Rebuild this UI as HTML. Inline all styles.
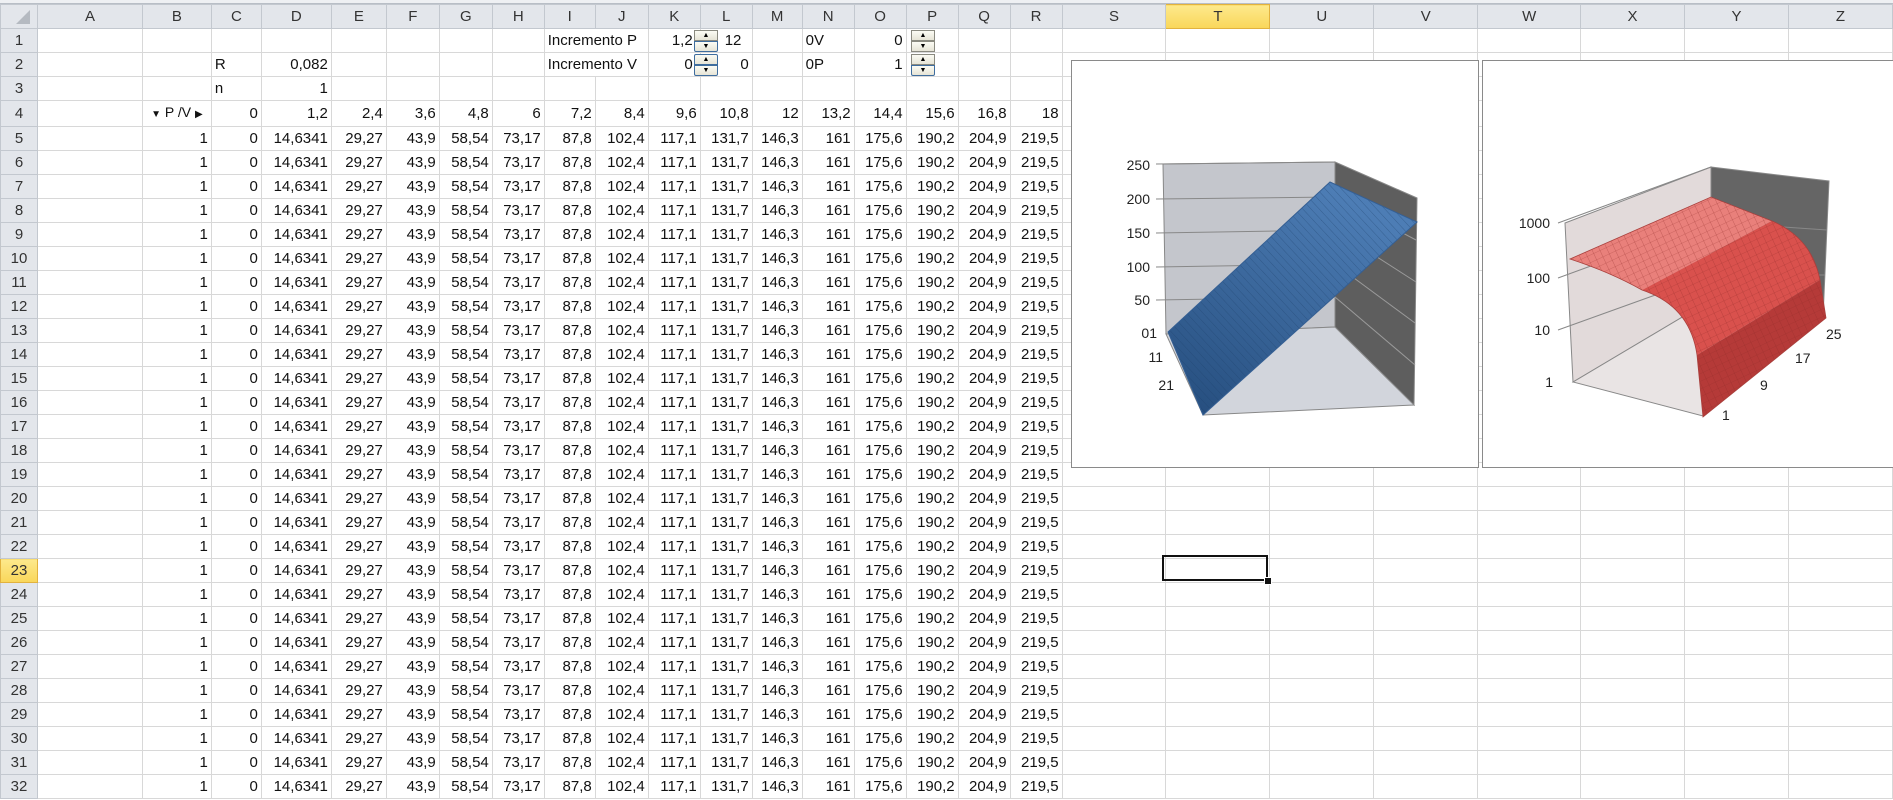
<!DOCTYPE html>
<html><head><meta charset="utf-8">
<style>
html,body{margin:0;padding:0;background:#fff;width:1893px;height:800px;overflow:hidden;font-family:"Liberation Sans",Arial,sans-serif;}
#top{position:absolute;left:0;top:0;width:1893px;height:4px;background:#eef0f3;border-bottom:1px solid #b8bec6;box-sizing:border-box}
table{position:absolute;left:0;top:4px;border-collapse:collapse;table-layout:fixed;font-size:15px;color:#111}
tr{height:24px}
td,th{height:24px;padding:0 3px;border:1px solid #d8d8d8;white-space:nowrap;overflow:hidden;box-sizing:border-box;line-height:22px}
th{background:#e3e6eb;border-color:#c3c8cf;font-weight:normal;color:#333;text-align:center;font-size:15px}
td{text-align:right}
td.l{text-align:left}
td.k{padding-right:7px;overflow:visible}
th.sel{background:linear-gradient(#fde98c,#f9d65a);border-color:#e2b23e}
.spin{position:absolute;width:24px;height:23px;box-sizing:border-box}
.spin div{height:11px;box-sizing:border-box;border:1px solid #8a8a80;background:linear-gradient(#fbfbf4,#e6e4d6);font-size:7px;line-height:9px;text-align:center;color:#000}
.spin div.b{border-color:#3f6d9e;border-radius:0 0 2px 2px}
</style></head><body>
<div id="top"></div>
<table>
<colgroup><col style="width:34px"><col style="width:105px"><col style="width:69px"><col style="width:50px"><col style="width:70px"><col style="width:55px"><col style="width:53px"><col style="width:53px"><col style="width:52px"><col style="width:51px"><col style="width:53px"><col style="width:52px"><col style="width:52px"><col style="width:50px"><col style="width:52px"><col style="width:52px"><col style="width:52px"><col style="width:52px"><col style="width:52px"><col style="width:104px"><col style="width:104px"><col style="width:104px"><col style="width:104px"><col style="width:103px"><col style="width:104px"><col style="width:104px"><col style="width:104px"></colgroup>
<thead><tr><th><svg width="20" height="18" style="display:block;margin-left:10px"><polygon points="16,2 16,16 2,16" fill="#b5bac1"/></svg></th><th>A</th><th>B</th><th>C</th><th>D</th><th>E</th><th>F</th><th>G</th><th>H</th><th>I</th><th>J</th><th>K</th><th>L</th><th>M</th><th>N</th><th>O</th><th>P</th><th>Q</th><th>R</th><th>S</th><th class="sel">T</th><th>U</th><th>V</th><th>W</th><th>X</th><th>Y</th><th>Z</th></tr></thead>
<tbody>
<tr><th>1</th><td></td><td></td><td></td><td></td><td></td><td></td><td></td><td></td><td class="l" colspan="2">Incremento P</td><td class="k">1,2</td><td class="l" style="padding-left:24px">12</td><td></td><td class="l">0V</td><td>0</td><td></td><td></td><td></td><td></td><td></td><td></td><td></td><td></td><td></td><td></td><td></td></tr>
<tr><th>2</th><td></td><td></td><td class="l">R</td><td>0,082</td><td></td><td></td><td></td><td></td><td class="l" colspan="2">Incremento V</td><td class="k">0</td><td>0</td><td></td><td class="l">0P</td><td>1</td><td></td><td></td><td></td><td></td><td></td><td></td><td></td><td></td><td></td><td></td><td></td></tr>
<tr><th>3</th><td></td><td></td><td class="l">n</td><td>1</td><td></td><td></td><td></td><td></td><td></td><td></td><td></td><td></td><td></td><td></td><td></td><td></td><td></td><td></td><td></td><td></td><td></td><td></td><td></td><td></td><td></td><td></td></tr>
<tr><th>4</th><td></td><td style="text-align:center;font-size:14px"><span style="font-size:10px">&#9660;</span> P /V <span style="font-size:10px">&#9654;</span></td><td>0</td><td>1,2</td><td>2,4</td><td>3,6</td><td>4,8</td><td>6</td><td>7,2</td><td>8,4</td><td>9,6</td><td>10,8</td><td>12</td><td>13,2</td><td>14,4</td><td>15,6</td><td>16,8</td><td>18</td><td></td><td></td><td></td><td></td><td></td><td></td><td></td><td></td></tr>
<tr><th>5</th><td></td><td>1</td><td>0</td><td>14,6341</td><td>29,27</td><td>43,9</td><td>58,54</td><td>73,17</td><td>87,8</td><td>102,4</td><td>117,1</td><td>131,7</td><td>146,3</td><td>161</td><td>175,6</td><td>190,2</td><td>204,9</td><td>219,5</td><td></td><td></td><td></td><td></td><td></td><td></td><td></td><td></td></tr>
<tr><th>6</th><td></td><td>1</td><td>0</td><td>14,6341</td><td>29,27</td><td>43,9</td><td>58,54</td><td>73,17</td><td>87,8</td><td>102,4</td><td>117,1</td><td>131,7</td><td>146,3</td><td>161</td><td>175,6</td><td>190,2</td><td>204,9</td><td>219,5</td><td></td><td></td><td></td><td></td><td></td><td></td><td></td><td></td></tr>
<tr><th>7</th><td></td><td>1</td><td>0</td><td>14,6341</td><td>29,27</td><td>43,9</td><td>58,54</td><td>73,17</td><td>87,8</td><td>102,4</td><td>117,1</td><td>131,7</td><td>146,3</td><td>161</td><td>175,6</td><td>190,2</td><td>204,9</td><td>219,5</td><td></td><td></td><td></td><td></td><td></td><td></td><td></td><td></td></tr>
<tr><th>8</th><td></td><td>1</td><td>0</td><td>14,6341</td><td>29,27</td><td>43,9</td><td>58,54</td><td>73,17</td><td>87,8</td><td>102,4</td><td>117,1</td><td>131,7</td><td>146,3</td><td>161</td><td>175,6</td><td>190,2</td><td>204,9</td><td>219,5</td><td></td><td></td><td></td><td></td><td></td><td></td><td></td><td></td></tr>
<tr><th>9</th><td></td><td>1</td><td>0</td><td>14,6341</td><td>29,27</td><td>43,9</td><td>58,54</td><td>73,17</td><td>87,8</td><td>102,4</td><td>117,1</td><td>131,7</td><td>146,3</td><td>161</td><td>175,6</td><td>190,2</td><td>204,9</td><td>219,5</td><td></td><td></td><td></td><td></td><td></td><td></td><td></td><td></td></tr>
<tr><th>10</th><td></td><td>1</td><td>0</td><td>14,6341</td><td>29,27</td><td>43,9</td><td>58,54</td><td>73,17</td><td>87,8</td><td>102,4</td><td>117,1</td><td>131,7</td><td>146,3</td><td>161</td><td>175,6</td><td>190,2</td><td>204,9</td><td>219,5</td><td></td><td></td><td></td><td></td><td></td><td></td><td></td><td></td></tr>
<tr><th>11</th><td></td><td>1</td><td>0</td><td>14,6341</td><td>29,27</td><td>43,9</td><td>58,54</td><td>73,17</td><td>87,8</td><td>102,4</td><td>117,1</td><td>131,7</td><td>146,3</td><td>161</td><td>175,6</td><td>190,2</td><td>204,9</td><td>219,5</td><td></td><td></td><td></td><td></td><td></td><td></td><td></td><td></td></tr>
<tr><th>12</th><td></td><td>1</td><td>0</td><td>14,6341</td><td>29,27</td><td>43,9</td><td>58,54</td><td>73,17</td><td>87,8</td><td>102,4</td><td>117,1</td><td>131,7</td><td>146,3</td><td>161</td><td>175,6</td><td>190,2</td><td>204,9</td><td>219,5</td><td></td><td></td><td></td><td></td><td></td><td></td><td></td><td></td></tr>
<tr><th>13</th><td></td><td>1</td><td>0</td><td>14,6341</td><td>29,27</td><td>43,9</td><td>58,54</td><td>73,17</td><td>87,8</td><td>102,4</td><td>117,1</td><td>131,7</td><td>146,3</td><td>161</td><td>175,6</td><td>190,2</td><td>204,9</td><td>219,5</td><td></td><td></td><td></td><td></td><td></td><td></td><td></td><td></td></tr>
<tr><th>14</th><td></td><td>1</td><td>0</td><td>14,6341</td><td>29,27</td><td>43,9</td><td>58,54</td><td>73,17</td><td>87,8</td><td>102,4</td><td>117,1</td><td>131,7</td><td>146,3</td><td>161</td><td>175,6</td><td>190,2</td><td>204,9</td><td>219,5</td><td></td><td></td><td></td><td></td><td></td><td></td><td></td><td></td></tr>
<tr><th>15</th><td></td><td>1</td><td>0</td><td>14,6341</td><td>29,27</td><td>43,9</td><td>58,54</td><td>73,17</td><td>87,8</td><td>102,4</td><td>117,1</td><td>131,7</td><td>146,3</td><td>161</td><td>175,6</td><td>190,2</td><td>204,9</td><td>219,5</td><td></td><td></td><td></td><td></td><td></td><td></td><td></td><td></td></tr>
<tr><th>16</th><td></td><td>1</td><td>0</td><td>14,6341</td><td>29,27</td><td>43,9</td><td>58,54</td><td>73,17</td><td>87,8</td><td>102,4</td><td>117,1</td><td>131,7</td><td>146,3</td><td>161</td><td>175,6</td><td>190,2</td><td>204,9</td><td>219,5</td><td></td><td></td><td></td><td></td><td></td><td></td><td></td><td></td></tr>
<tr><th>17</th><td></td><td>1</td><td>0</td><td>14,6341</td><td>29,27</td><td>43,9</td><td>58,54</td><td>73,17</td><td>87,8</td><td>102,4</td><td>117,1</td><td>131,7</td><td>146,3</td><td>161</td><td>175,6</td><td>190,2</td><td>204,9</td><td>219,5</td><td></td><td></td><td></td><td></td><td></td><td></td><td></td><td></td></tr>
<tr><th>18</th><td></td><td>1</td><td>0</td><td>14,6341</td><td>29,27</td><td>43,9</td><td>58,54</td><td>73,17</td><td>87,8</td><td>102,4</td><td>117,1</td><td>131,7</td><td>146,3</td><td>161</td><td>175,6</td><td>190,2</td><td>204,9</td><td>219,5</td><td></td><td></td><td></td><td></td><td></td><td></td><td></td><td></td></tr>
<tr><th>19</th><td></td><td>1</td><td>0</td><td>14,6341</td><td>29,27</td><td>43,9</td><td>58,54</td><td>73,17</td><td>87,8</td><td>102,4</td><td>117,1</td><td>131,7</td><td>146,3</td><td>161</td><td>175,6</td><td>190,2</td><td>204,9</td><td>219,5</td><td></td><td></td><td></td><td></td><td></td><td></td><td></td><td></td></tr>
<tr><th>20</th><td></td><td>1</td><td>0</td><td>14,6341</td><td>29,27</td><td>43,9</td><td>58,54</td><td>73,17</td><td>87,8</td><td>102,4</td><td>117,1</td><td>131,7</td><td>146,3</td><td>161</td><td>175,6</td><td>190,2</td><td>204,9</td><td>219,5</td><td></td><td></td><td></td><td></td><td></td><td></td><td></td><td></td></tr>
<tr><th>21</th><td></td><td>1</td><td>0</td><td>14,6341</td><td>29,27</td><td>43,9</td><td>58,54</td><td>73,17</td><td>87,8</td><td>102,4</td><td>117,1</td><td>131,7</td><td>146,3</td><td>161</td><td>175,6</td><td>190,2</td><td>204,9</td><td>219,5</td><td></td><td></td><td></td><td></td><td></td><td></td><td></td><td></td></tr>
<tr><th>22</th><td></td><td>1</td><td>0</td><td>14,6341</td><td>29,27</td><td>43,9</td><td>58,54</td><td>73,17</td><td>87,8</td><td>102,4</td><td>117,1</td><td>131,7</td><td>146,3</td><td>161</td><td>175,6</td><td>190,2</td><td>204,9</td><td>219,5</td><td></td><td></td><td></td><td></td><td></td><td></td><td></td><td></td></tr>
<tr><th class="sel">23</th><td></td><td>1</td><td>0</td><td>14,6341</td><td>29,27</td><td>43,9</td><td>58,54</td><td>73,17</td><td>87,8</td><td>102,4</td><td>117,1</td><td>131,7</td><td>146,3</td><td>161</td><td>175,6</td><td>190,2</td><td>204,9</td><td>219,5</td><td></td><td></td><td></td><td></td><td></td><td></td><td></td><td></td></tr>
<tr><th>24</th><td></td><td>1</td><td>0</td><td>14,6341</td><td>29,27</td><td>43,9</td><td>58,54</td><td>73,17</td><td>87,8</td><td>102,4</td><td>117,1</td><td>131,7</td><td>146,3</td><td>161</td><td>175,6</td><td>190,2</td><td>204,9</td><td>219,5</td><td></td><td></td><td></td><td></td><td></td><td></td><td></td><td></td></tr>
<tr><th>25</th><td></td><td>1</td><td>0</td><td>14,6341</td><td>29,27</td><td>43,9</td><td>58,54</td><td>73,17</td><td>87,8</td><td>102,4</td><td>117,1</td><td>131,7</td><td>146,3</td><td>161</td><td>175,6</td><td>190,2</td><td>204,9</td><td>219,5</td><td></td><td></td><td></td><td></td><td></td><td></td><td></td><td></td></tr>
<tr><th>26</th><td></td><td>1</td><td>0</td><td>14,6341</td><td>29,27</td><td>43,9</td><td>58,54</td><td>73,17</td><td>87,8</td><td>102,4</td><td>117,1</td><td>131,7</td><td>146,3</td><td>161</td><td>175,6</td><td>190,2</td><td>204,9</td><td>219,5</td><td></td><td></td><td></td><td></td><td></td><td></td><td></td><td></td></tr>
<tr><th>27</th><td></td><td>1</td><td>0</td><td>14,6341</td><td>29,27</td><td>43,9</td><td>58,54</td><td>73,17</td><td>87,8</td><td>102,4</td><td>117,1</td><td>131,7</td><td>146,3</td><td>161</td><td>175,6</td><td>190,2</td><td>204,9</td><td>219,5</td><td></td><td></td><td></td><td></td><td></td><td></td><td></td><td></td></tr>
<tr><th>28</th><td></td><td>1</td><td>0</td><td>14,6341</td><td>29,27</td><td>43,9</td><td>58,54</td><td>73,17</td><td>87,8</td><td>102,4</td><td>117,1</td><td>131,7</td><td>146,3</td><td>161</td><td>175,6</td><td>190,2</td><td>204,9</td><td>219,5</td><td></td><td></td><td></td><td></td><td></td><td></td><td></td><td></td></tr>
<tr><th>29</th><td></td><td>1</td><td>0</td><td>14,6341</td><td>29,27</td><td>43,9</td><td>58,54</td><td>73,17</td><td>87,8</td><td>102,4</td><td>117,1</td><td>131,7</td><td>146,3</td><td>161</td><td>175,6</td><td>190,2</td><td>204,9</td><td>219,5</td><td></td><td></td><td></td><td></td><td></td><td></td><td></td><td></td></tr>
<tr><th>30</th><td></td><td>1</td><td>0</td><td>14,6341</td><td>29,27</td><td>43,9</td><td>58,54</td><td>73,17</td><td>87,8</td><td>102,4</td><td>117,1</td><td>131,7</td><td>146,3</td><td>161</td><td>175,6</td><td>190,2</td><td>204,9</td><td>219,5</td><td></td><td></td><td></td><td></td><td></td><td></td><td></td><td></td></tr>
<tr><th>31</th><td></td><td>1</td><td>0</td><td>14,6341</td><td>29,27</td><td>43,9</td><td>58,54</td><td>73,17</td><td>87,8</td><td>102,4</td><td>117,1</td><td>131,7</td><td>146,3</td><td>161</td><td>175,6</td><td>190,2</td><td>204,9</td><td>219,5</td><td></td><td></td><td></td><td></td><td></td><td></td><td></td><td></td></tr>
<tr><th>32</th><td></td><td>1</td><td>0</td><td>14,6341</td><td>29,27</td><td>43,9</td><td>58,54</td><td>73,17</td><td>87,8</td><td>102,4</td><td>117,1</td><td>131,7</td><td>146,3</td><td>161</td><td>175,6</td><td>190,2</td><td>204,9</td><td>219,5</td><td></td><td></td><td></td><td></td><td></td><td></td><td></td><td></td></tr>
</tbody></table>

<div class="spin" style="left:694px;top:30px"><div>&#9650;</div><div class="b">&#9660;</div></div>
<div class="spin" style="left:694px;top:54px"><div class="b" style="border-radius:2px 2px 0 0">&#9650;</div><div class="b">&#9660;</div></div>
<div class="spin" style="left:911px;top:30px"><div>&#9650;</div><div>&#9660;</div></div>
<div class="spin" style="left:911px;top:54px"><div>&#9650;</div><div class="b">&#9660;</div></div>

<div style="position:absolute;left:1162px;top:555px;width:106px;height:26px;border:2px solid #111;box-sizing:border-box"></div>
<div style="position:absolute;left:1264px;top:577px;width:6px;height:6px;background:#111;border:1px solid #fff"></div>

<svg style="position:absolute;left:0;top:0" width="1893" height="800" font-family="Liberation Sans, Arial, sans-serif" font-size="14" fill="#222">
<defs>
<linearGradient id="bl" x1="0" y1="1" x2="0.6" y2="0"><stop offset="0" stop-color="#244c7c"/><stop offset="1" stop-color="#4d7db5"/></linearGradient>
<pattern id="bp" width="6" height="6" patternUnits="userSpaceOnUse" patternTransform="rotate(-43)"><line x1="0" y1="0" x2="0" y2="6" stroke="#1c3f6a" stroke-width="1" opacity="0.45"/></pattern>
<pattern id="rp" width="7" height="7" patternUnits="userSpaceOnUse" patternTransform="rotate(-25)"><line x1="0" y1="0" x2="0" y2="7" stroke="#8e2a28" stroke-width="0.8" opacity="0.5"/><line x1="0" y1="0" x2="7" y2="0" stroke="#8e2a28" stroke-width="0.8" opacity="0.4"/></pattern>
</defs>
<rect x="1071.5" y="60.5" width="407" height="407" fill="#fff" stroke="#8a8a8a"/>
<polygon points="1163,164 1335,162 1335,327 1166,334" fill="#c4c6cc" stroke="#888"/>
<polygon points="1335,162 1417,198 1414,405 1335,327" fill="#5e5e5e" stroke="#888"/>
<polygon points="1166,334 1335,327 1414,405 1203,415" fill="#d2d5dc" stroke="#888"/>
<g stroke="#888" stroke-width="1"><line x1="1156" y1="164" x2="1335" y2="162"/><line x1="1156" y1="199" x2="1335" y2="197"/><line x1="1156" y1="233" x2="1335" y2="230"/><line x1="1156" y1="267" x2="1335" y2="264"/><line x1="1156" y1="300" x2="1335" y2="297"/></g>
<g stroke="#9a9a9a" stroke-width="1"><line x1="1335" y1="197" x2="1416" y2="240"/><line x1="1335" y1="230" x2="1416" y2="282"/><line x1="1335" y1="264" x2="1415" y2="323"/><line x1="1335" y1="297" x2="1415" y2="365"/></g>
<polygon points="1168,332 1330,182 1417,222 1203,415" fill="url(#bl)"/>
<polygon points="1168,332 1330,182 1417,222 1203,415" fill="url(#bp)" stroke="#355f93"/>
<g font-size="14"><text x="1150" y="170" text-anchor="end">250</text><text x="1150" y="204" text-anchor="end">200</text><text x="1150" y="238" text-anchor="end">150</text><text x="1150" y="272" text-anchor="end">100</text><text x="1150" y="305" text-anchor="end">50</text><text x="1157" y="338" text-anchor="end">01</text><text x="1163" y="362" text-anchor="end">11</text><text x="1174" y="390" text-anchor="end">21</text></g>
<rect x="1482.5" y="60.5" width="420" height="407" fill="#fff" stroke="#8a8a8a"/>
<polygon points="1565,223 1711,167 1711,300 1573,382" fill="#e2dada" stroke="#888"/>
<polygon points="1573,382 1711,300 1823,318 1703,416" fill="#e9e4e4" stroke="#888"/>
<polygon points="1711,167 1829,181 1823,318 1711,300" fill="#656565" stroke="#888"/>
<g stroke="#888"><line x1="1558" y1="223" x2="1711" y2="167"/><line x1="1558" y1="278" x2="1711" y2="222"/><line x1="1558" y1="330" x2="1711" y2="275"/><line x1="1711" y1="222" x2="1827" y2="230"/><line x1="1711" y1="275" x2="1825" y2="275"/></g>
<path d="M1570,259 L1711,197 L1772,221 L1642,290 Q1610,272 1570,259 Z" fill="#e9807b"/>
<path d="M1642,290 L1772,221 Q1812,238 1820,280 L1697,355 Q1690,306 1642,290 Z" fill="#d9514d"/>
<path d="M1697,355 L1820,280 L1826,318 L1703,417 Z" fill="#b53a38"/>
<path d="M1570,259 L1711,197 L1772,221 Q1812,238 1820,280 L1826,318 L1703,417 L1697,355 Q1690,306 1642,290 Q1610,272 1570,259 Z" fill="url(#rp)" stroke="#a8403d" stroke-width="0.8"/>
<g font-size="14"><text x="1550" y="228" text-anchor="end">1000</text><text x="1550" y="283" text-anchor="end">100</text><text x="1550" y="335" text-anchor="end">10</text><text x="1553" y="387" text-anchor="end">1</text><text x="1826" y="339">25</text><text x="1795" y="363">17</text><text x="1760" y="390">9</text><text x="1722" y="420">1</text></g>
</svg>
</body></html>
